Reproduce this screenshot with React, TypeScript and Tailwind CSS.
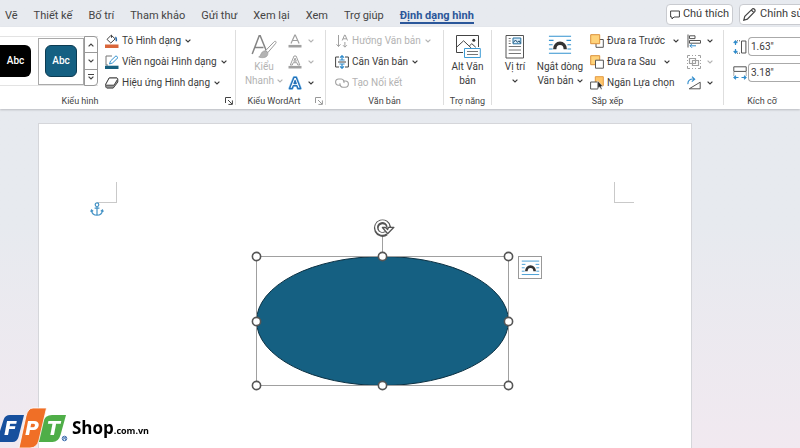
import type { ReactNode } from 'react';

const MUTED = '#a0a0a0';

function Chevron({ className = '' }: { className?: string }) {
  return (
    <svg className={`h-[6px] w-[6px] shrink-0 ${className}`} viewBox="0 0 6 6" fill="none" stroke="currentColor" strokeWidth="1.2">
      <path d="M.6 1.6 3 4 5.4 1.6" />
    </svg>
  );
}

function Launcher({ muted = false }: { muted?: boolean }) {
  return (
    <button aria-label="Mở hộp thoại" className={`absolute right-[2px] bottom-[3px] h-2 w-2 ${muted ? 'text-[#999]' : 'text-[#444]'}`}>
      <svg className="h-2 w-2" viewBox="0 0 8 8" fill="none" stroke="currentColor">
        <path d="M.5 6V.5H6M3 3l4 4M7.4 3.4v4h-4" />
      </svg>
    </button>
  );
}

function Group({ label, className, children, launcher }: { label: string; className: string; children: ReactNode; launcher?: ReactNode }) {
  return (
    <section className={`relative flex flex-col ${className}`}>
      <div className="flex h-16 items-start">{children}</div>
      <h2 className="text-center text-[9px] leading-[14px] whitespace-nowrap text-[#444]">{label}</h2>
      {launcher}
    </section>
  );
}

function Row({ icon, text, muted = false, gap = 'gap-1', chevron = true }: { icon: ReactNode; text: string; muted?: boolean; gap?: string; chevron?: boolean }) {
  return (
    <button disabled={muted} className={`flex h-[21px] items-center whitespace-nowrap ${gap} ${muted ? 'text-[#b3b3b3]' : 'text-[#3b3b3b]'}`}>
      <span className="flex items-center gap-[3px]">
        {icon}
        {text}
      </span>
      {chevron && <Chevron />}
    </button>
  );
}

function SmallButton({ icon, label, muted = false }: { icon: ReactNode; label: string; muted?: boolean }) {
  return (
    <button aria-label={label} disabled={muted} className={`flex h-[21px] items-center gap-[6px] ${muted ? 'text-[#b3b3b3]' : 'text-[#3b3b3b]'}`}>
      {icon}
      <Chevron />
    </button>
  );
}

const icon14 = 'h-[14px] w-[14px] shrink-0';

const FillIcon = () => (
  <svg className={icon14} viewBox="0 0 14 14" fill="none">
    <path d="M6.5.8v3M6.2 1.2 2 5.4 5.8 9l4.4-4.1-4-3.7Z" stroke="#444" />
    <path d="M10.3 3.2c1.3.4 1.2 2 1 4" stroke="#2b6cab" strokeWidth="1.5" />
    <path d="M0 10.5h13.5V14H0z" fill="#d9663a" />
  </svg>
);
const OutlineIcon = () => (
  <svg className={icon14} viewBox="0 0 14 14" fill="none">
    <path d="M7 1H1v9h2" stroke="#777" />
    <path d="m4.5 9 1-3L11 .8l2 1.8-5.4 5.3L4.5 9Z" fill="#fff" stroke="#3492cf" />
    <path d="M0 10.7h13.5V14H0z" fill="#17607f" />
  </svg>
);
const EffectIcon = () => (
  <svg className={icon14} viewBox="0 0 14 14" stroke="#444" strokeLinejoin="round">
    <path d="m4.2 2-3.4 6.5v2.6l1 1h6.4l4.6-6V3.2L12 2H4.2Z" fill="#999" />
    <path d="M4.2 2H12q1 .4.5 1.4L9 9.2H1.3q-1 0-.5-1.1L4.2 2Z" fill="#fff" />
  </svg>
);
const LetterIcon = ({ variant }: { variant: 'fill' | 'outline' | 'effect' }) =>
  variant === 'effect' ? (
    <svg className={icon14} viewBox="0 0 14 14" fill="none" strokeLinejoin="round">
      <path d="M1.5 12.5 6 1.3h2.2l4.4 11.2h-2.7L8.9 9.7H5.2l-1 2.8H1.5ZM6 7.5h2.2L7.1 4.4 6 7.5Z" stroke="#8cc6f0" strokeWidth="2.4" />
      <path d="M1.5 12.5 6 1.3h2.2l4.4 11.2h-2.7L8.9 9.7H5.2l-1 2.8H1.5ZM6 7.5h2.2L7.1 4.4 6 7.5Z" fill="#fff" stroke="#2370b7" strokeWidth="1.3" />
    </svg>
  ) : (
    <svg className={icon14} viewBox="0 0 14 14" fill="none" stroke={MUTED}>
      {variant === 'fill' ? (
        <path d="M3 9.6 6.8 1h.5l3.8 8.6M4.4 6.5h5.3" strokeWidth="1.2" />
      ) : (
        <path d="M2.3 10 6 1h2.1l3.7 9h-2l-.9-2.3H5.2L4.3 10h-2ZM5.8 6.2h2.5L7.1 3.1 5.8 6.2Z" />
      )}
      <path d="M.5 12.2h13" strokeWidth="2.6" />
    </svg>
  );
const DirectionIcon = () => (
  <svg className={icon14} viewBox="0 0 14 14" fill="none" stroke={MUTED}>
    <path d="M3.5 1v11.5M1.5 10.3l2 2.2 2-2.2M7.2 6.5 9.6 1h.5l2.4 5.5M8 4.8h3.8M9.9 8v5M8 11.2l1.9 2 2-2" />
  </svg>
);
const AlignTextIcon = () => (
  <svg className={icon14} viewBox="0 0 14 14" fill="none">
    <path d="M4 2H.6v10H4M10 2h3.4v10H10" stroke="#444" />
    <path d="M3 7h8" stroke="#444" />
    <path d="M7 .5V5M7 9v4.5M5 2.6 7 .7l2 1.9M5 11.4l2 1.9 2-1.9M4.4 5h5.2M4.4 9h5.2" stroke="#2f8bcb" strokeWidth="1.2" />
  </svg>
);
const LinkIcon = () => (
  <svg className={icon14} viewBox="0 0 14 14" fill="none" stroke={MUTED} strokeWidth="1.1">
    <path d="M6 9.2H3.7a3 3 0 0 1 0-6.2h2.5a3 3 0 0 1 2.7 4" />
    <path d="M8 5h2.3a3 3 0 0 1 0 6.2H7.8a3 3 0 0 1-2.7-4" />
  </svg>
);
const QuickStyleIcon = () => (
  <svg className="h-[26px] w-[26px]" viewBox="0 0 26 26" fill="none">
    <path d="M1.2 20 8.2 1.8h1L15 16M4 13.5h8.5" stroke="#858585" strokeWidth="1.5" />
    <path d="M24.5 7.3c1 .7.6 1.5 0 2.3l-7.7 9-2.2-2 8.2-8.5c.6-.6 1-1 1.7-.8Z" fill="#fff" stroke="#999" />
    <path d="M14 16.8c2.4.1 3.6 2.2 2.4 4.6-1.2 2.2-5.4 3-8.7 1.5 2.5-.5 1.7-5.6 6.3-6.1Z" fill="#b3b3b3" stroke="#999" strokeWidth=".7" />
  </svg>
);
const AltTextIcon = () => (
  <svg className="h-[26px] w-[26px]" viewBox="0 0 26 26" fill="none">
    <path d="M8 18.5H1.5v-17h22V13" stroke="#444" />
    <path d="m1.8 13 6.8-6.2 7.6 7.2M14.3 12l2.5-2.3 4 3.6" stroke="#444" />
    <circle cx="18.8" cy="6.3" r="1.5" fill="#333" />
    <path d="M9.5 14.5h15.8v9H9.5z" fill="#fff" stroke="#3d9bd5" />
    <path d="M12 17.5h11M12 20.5h11" stroke="#777" />
  </svg>
);
const PositionIcon = () => (
  <svg className="h-[26px] w-[20px]" viewBox="0 0 20 26" fill="none">
    <path d="M1 1.5h17.5v22.5H1z" fill="#fff" stroke="#555" />
    <path d="M8 4h7.8v5.8H8z" fill="#d6ebfa" stroke="#26709f" />
    <path d="M8.3 8.6 10.5 6l2 2.4 1.5-1.6 1.5 2.5" stroke="#1f4e6f" />
    <path d="M3.7 4.5h2M3.7 7h2M3.7 9.5h2M3.7 12.5H16M3.7 16H16M3.7 19.5H16" stroke="#777" />
  </svg>
);
const WrapIcon = ({ className }: { className: string }) => (
  <svg className={className} viewBox="0 0 26 22" fill="none">
    <path d="M1 1.5h24M1 20h24M1 6h5M20 6h5M1 10.7h4M21 10.7h4M1 15.4h4M21 15.4h4" stroke="#3393d0" strokeWidth="1.2" />
    <path d="M7.3 15.5a5.7 6.4 0 0 1 11.4 0" stroke="#333" strokeWidth="3.6" />
  </svg>
);
const ForwardIcon = () => (
  <svg className={icon14} viewBox="0 0 14 14">
    <path d="M9.5 5.5h3.8v7.8H6V10" fill="#fff" stroke="#555" />
    <path d="M.7.7h9v9h-9z" fill="#ffd37a" stroke="#dc9138" />
  </svg>
);
const BackwardIcon = () => (
  <svg className={icon14} viewBox="0 0 14 14">
    <path d="M.7.7h9v9h-9z" fill="#ffd37a" stroke="#dc9138" />
    <path d="M5.5 5.2h7.9v8H5.5z" fill="#fff" stroke="#555" />
  </svg>
);
const PaneIcon = () => (
  <svg className={icon14} viewBox="0 0 14 14">
    <path d="M5.3.7h8v9h-8z" fill="#ffc568" stroke="#e39a43" />
    <path d="M.6 6h7.2v7H.6z" fill="#fff" stroke="#555" />
    <path d="m7.6 4.8.3 7.6 1.8-1.5 1.3 2.6 1.1-.6-1.2-2.4h2.1L7.6 4.8Z" fill="#222" stroke="#fff" strokeWidth=".5" />
  </svg>
);
const AlignIcon = () => (
  <svg className={icon14} viewBox="0 0 14 14" fill="none">
    <path d="M1 .5v13M2.5 1.8H8v2.8H2.5zM2.5 6.5h11v2.7h-11z" stroke="#555" />
    <path d="M9 11.8H3M5 9.8l-2 2 2 2" stroke="#2f8bcb" />
  </svg>
);
const GroupIcon = () => (
  <svg className={icon14} viewBox="0 0 14 14" fill="none" stroke={MUTED}>
    <path d="M2.5 3.5h6v5h-6zM5.5 5.5h6v5h-6z" strokeWidth="1.2" />
    <path d="M.5 3V.5H3M11 .5h2.5V3M13.5 11v2.5H11M3 13.5H.5V11M5 .5h1M8 .5h1M5 13.5h1M8 13.5h1M.5 5v1M.5 8v1M13.5 5v1M13.5 8v1" />
  </svg>
);
const RotateIcon = () => (
  <svg className={icon14} viewBox="0 0 14 14" fill="none">
    <path d="M2.2 12.8h11V6.2l-11 6.6Z" stroke="#555" />
    <path d="M1 8.2C.4 4.8 3.3 2.5 7 3.2M5 .7l2.7 2.6L4.8 5.6" stroke="#2f8bcb" strokeWidth="1.1" />
  </svg>
);
const HeightIcon = () => (
  <svg className={icon14} viewBox="0 0 14 14" fill="none">
    <path d="M8.5 1h4.4v12H8.5z" stroke="#555" />
    <path d="M4 .8h3M4 13.2h3" stroke="#555" strokeDasharray="1 1" />
    <path d="M2.5 1v4M2.5 9v4M.7 3l1.8-2 1.8 2M.7 11l1.8 2 1.8-2" stroke="#2f8bcb" strokeWidth="1.2" />
  </svg>
);
const WidthIcon = () => (
  <svg className={icon14} viewBox="0 0 14 14" fill="none">
    <path d="M.8.8h12.4v4.6H.8z" stroke="#555" />
    <path d="M.8 6.5v3M13.2 6.5v3" stroke="#555" strokeDasharray="1 1" />
    <path d="M1 11.5h4.5M8.5 11.5H13M3 9.7l-2 1.8 2 1.8M11 9.7l2 1.8-2 1.8" stroke="#2f8bcb" strokeWidth="1.2" />
  </svg>
);

const tabs = ['Vẽ', 'Thiết kế', 'Bố trí', 'Tham khảo', 'Gửi thư', 'Xem lại', 'Xem', 'Trợ giúp'];

function TabBar() {
  return (
    <header className="flex h-[27px] items-start overflow-hidden pt-1 pl-[5px]">
      <nav className="flex gap-4 pt-px text-[11px] leading-[22px] whitespace-nowrap text-[#444]">
        {tabs.map((tab) => (
          <button key={tab} className="h-[22px]">{tab}</button>
        ))}
        <button aria-current="page" className="h-[19px] border-b-2 border-[#2b579a] font-bold text-[#2b579a]">Định dạng hình</button>
      </nav>
      <div className="ml-auto flex w-[134px] shrink-0 gap-[6px] text-[11px] whitespace-nowrap text-[#3b3b3b]">
        <button className="flex h-[21px] w-[67px] shrink-0 items-center justify-center gap-[3px] rounded border border-[#c9cbd0] bg-white">
          <svg className="h-[10px] w-[10px] shrink-0" viewBox="0 0 10 10" fill="none" stroke="#444">
            <path d="M.6 1h8.8v6H4L2 9V7H.6V1Z" />
          </svg>
          Chú thích
        </button>
        <button className="flex h-[21px] w-[90px] shrink-0 items-center gap-1 rounded border border-[#c9cbd0] bg-white pl-[3px]">
          <svg className="h-[13px] w-[13px] shrink-0" viewBox="0 0 13 13" fill="none" stroke="#444" strokeWidth="1.2">
            <path d="m.8 12.2 1-3.8L9.4.9c1.5-.8 3.2.8 2.5 2.4l-7.6 7.8-3.5 1.1ZM8.3 2l2.6 2.6" />
          </svg>
          Chỉnh sửa
        </button>
      </div>
    </header>
  );
}

function Divider() {
  return <div className="h-[75px] w-px shrink-0 bg-[#dedede]" />;
}

function Gallery() {
  return (
    <div className="mt-[6px] flex h-[50px] w-[98px] shrink-0 items-center border-y border-[#e3e3e3]">
      <button aria-label="Kiểu đen" className="h-8 w-[31px] rounded-r-md bg-black text-[10px] font-medium text-white">Abc</button>
      <div className="ml-[7px] flex h-[47px] w-[46px] items-center justify-center border border-[#aaa]">
        <button className="h-8 w-8 rounded-md border border-[#0c3b52] bg-[#156082] text-[10px] font-medium text-white">Abc</button>
      </div>
      <div className="flex h-[50px] flex-1 flex-col divide-y divide-[#999] rounded-r-sm border border-[#999] text-[#444]">
        <button aria-label="Lên" className="flex flex-1 items-center justify-center"><Chevron className="rotate-180" /></button>
        <button aria-label="Xuống" className="flex flex-1 items-center justify-center"><Chevron /></button>
        <button aria-label="Thêm" className="flex flex-1 flex-col items-center justify-center">
          <span className="h-px w-[6px] bg-current" />
          <Chevron />
        </button>
      </div>
    </div>
  );
}

function Ribbon() {
  return (
    <div className="flex h-[82px] items-start overflow-hidden bg-white pt-[3px] text-[10px] leading-[14px] shadow-[0_1px_2px_rgba(0,0,0,0.2)]">
      <Group label="Kiểu hình" className="w-[235px] shrink-0 [&>h2]:pr-[75px]" launcher={<Launcher />}>
        <Gallery />
        <div className="ml-[7px] flex flex-col">
          <Row icon={<FillIcon />} text="Tô Hình dạng" />
          <Row icon={<OutlineIcon />} text="Viền ngoài Hình dạng" />
          <Row icon={<EffectIcon />} text="Hiệu ứng Hình dạng" />
        </div>
      </Group>
      <Divider />
      <Group label="Kiểu WordArt" className="w-[89px] shrink-0 [&>h2]:pr-[13px]" launcher={<Launcher muted />}>
        <button disabled className="ml-1 flex w-[48px] shrink-0 flex-col items-center pt-1 text-[#b3b3b3]">
          <QuickStyleIcon />
          <span>Kiểu</span>
          <span className="flex items-center gap-[3px] whitespace-nowrap">Nhanh <Chevron /></span>
        </button>
        <div className="flex flex-col">
          <SmallButton muted label="Tô văn bản" icon={<LetterIcon variant="fill" />} />
          <SmallButton muted label="Viền văn bản" icon={<LetterIcon variant="outline" />} />
          <SmallButton label="Hiệu ứng văn bản" icon={<LetterIcon variant="effect" />} />
        </div>
      </Group>
      <Divider />
      <Group label="Văn bản" className="w-[117px] shrink-0">
        <div className="ml-[9px] flex flex-col">
          <Row muted icon={<DirectionIcon />} text="Hướng Văn bản" />
          <Row icon={<AlignTextIcon />} text="Căn Văn bản" />
          <Row muted chevron={false} icon={<LinkIcon />} text="Tạo Nối kết" />
        </div>
      </Group>
      <Divider />
      <Group label="Trợ năng" className="w-[47px] shrink-0">
        <button className="flex w-full flex-col items-center pt-1 text-[#3b3b3b]">
          <AltTextIcon />
          <span className="whitespace-nowrap">Alt Văn</span>
          <span>bản</span>
        </button>
      </Group>
      <Divider />
      <Group label="Sắp xếp" className="w-[231px] shrink-0">
        <button className="ml-[8px] flex w-[30px] shrink-0 flex-col items-center pt-1 text-[#3b3b3b]">
          <PositionIcon />
          <span className="whitespace-nowrap">Vị trí</span>
          <Chevron className="mt-1" />
        </button>
        <button className="ml-[4px] flex w-[52px] shrink-0 flex-col items-center pt-1 text-[#3b3b3b]">
          <span className="flex h-[26px] items-start"><WrapIcon className="h-[22px] w-[24px]" /></span>
          <span className="whitespace-nowrap">Ngắt dòng</span>
          <span className="flex items-center gap-[3px] whitespace-nowrap">Văn bản <Chevron /></span>
        </button>
        <div className="ml-1 flex w-[97px] shrink-0 flex-col items-start">
          <Row gap="gap-2" icon={<ForwardIcon />} text="Đưa ra Trước" />
          <Row gap="gap-2" icon={<BackwardIcon />} text="Đưa ra Sau" />
          <Row chevron={false} icon={<PaneIcon />} text="Ngăn Lựa chọn" />
        </div>
        <div className="flex flex-col">
          <SmallButton label="Căn chỉnh" icon={<AlignIcon />} />
          <SmallButton muted label="Nhóm" icon={<GroupIcon />} />
          <SmallButton label="Xoay" icon={<RotateIcon />} />
        </div>
      </Group>
      <Divider />
      <Group label="Kích cỡ" className="min-w-0 flex-1">
        <div className="flex w-full flex-col gap-[7px] pt-[7px] pl-[9px] text-[#3b3b3b]">
          <label className="flex h-[19px] items-center gap-px">
            <HeightIcon />
            <input aria-label="Chiều cao" defaultValue={'1.63"'} className="h-[19px] w-full min-w-0 rounded-l border border-r-0 border-[#aaa] pl-[2px]" />
          </label>
          <label className="flex h-[19px] items-center gap-px">
            <WidthIcon />
            <input aria-label="Chiều rộng" defaultValue={'3.18"'} className="h-[19px] w-full min-w-0 rounded-l border border-r-0 border-[#aaa] pl-[2px]" />
          </label>
        </div>
      </Group>
    </div>
  );
}

const handles = [
  [8, 42], [134, 42], [260, 42],
  [8, 107], [260, 107],
  [8, 171], [134, 171], [260, 171],
];

function SelectedShape() {
  return (
    <svg className="absolute top-[90px] left-[209px] h-[180px] w-[270px]" viewBox="0 0 270 180" fill="none" role="img" aria-label="Hình bầu dục">
      <ellipse cx="134.5" cy="107" rx="126" ry="64.5" fill="#156082" stroke="#0b3042" />
      <path d="M8.5 42.5h252v129H8.5zM134.5 22v17" stroke="#a0a0a0" />
      {handles.map(([x, y]) => (
        <circle key={`${x}-${y}`} cx={x + 0.5} cy={y + 0.5} r="4.1" fill="#fff" stroke="#555" strokeWidth="1.6" />
      ))}
      <path d="M138.2 19.3a6.3 6.3 0 1 1 2.6-6" stroke="#555" strokeWidth="4.8" />
      <path d="M137.8 18.7a6.3 6.3 0 1 1 2.8-5.7" stroke="#fff" strokeWidth="1.9" />
      <path d="M134.4 13.5h3.2l2 2 1-2.2h5.3l-6.3 6.4-5.2-6.2Z" fill="#fff" stroke="#555" strokeWidth="1.3" strokeLinejoin="round" />
    </svg>
  );
}

function Document() {
  return (
    <main className="flex flex-1 pt-[14px] pr-[108px] pl-[38px]">
      <article className="relative flex-1 border border-b-0 border-[#d5d6da] bg-white">
        <div className="absolute top-[58px] left-[58px] h-[21px] w-[20px] border-r border-b border-[#c9c9c9]" />
        <div className="absolute top-[58px] right-[57px] h-[21px] w-[20px] border-b border-l border-[#c9c9c9]" />
        <svg className="absolute top-[78px] left-[51px] h-[15px] w-[14px]" viewBox="0 0 14 15" fill="none" stroke="#4392c5" strokeWidth="1.2">
          <circle cx="7" cy="2.7" r="1.8" />
          <path d="M7 4.5V13M4.6 6.2h4.8M1.5 8.2C1.8 11 4 13.2 7 13.2s5.2-2.2 5.5-5M.7 9.8l.8-1.8 1.7 1.2M13.3 9.8l-.8-1.8-1.7 1.2" />
        </svg>
        <SelectedShape />
        <button aria-label="Tùy chọn bố trí" className="absolute top-[132px] left-[479px] flex h-[23px] w-[24px] items-center justify-center border border-[#999] bg-white">
          <WrapIcon className="h-[16px] w-[19px]" />
        </button>
      </article>
    </main>
  );
}

function Watermark() {
  return (
    <a href="#fpt" className="fixed bottom-0 left-0 flex h-[42px] items-start font-bold text-black" aria-label="FPT Shop.com.vn">
      <svg className="h-[42px] w-[70px]" viewBox="0 0 70 42">
        <path d="M10 9h14L18.500 31q-1.500 5-6 5H0V25L3.500 14Q5 9 10 9Z" fill="#17509d" />
        <path d="M52 9h14l-5.500 20q-2 7-8 7H38l5-20q2-7 9-7Z" fill="#4fae48" />
        <path d="M33 2h13.500L39 34q-2 8-9 8H19L26 10q2-8 7-8Z" fill="#f06f26" stroke="#fff" strokeWidth=".8" />
        <g fill="#fff" fontFamily="DejaVu Sans, sans-serif" fontSize="19" fontWeight="700" fontStyle="italic">
          <text x="4" y="29">F</text>
          <text x="25" y="29">P</text>
          <text x="47" y="29">T</text>
        </g>
        <circle cx="64.500" cy="32.500" r="2.300" fill="#fff" stroke="#17509d" strokeWidth=".8" />
        <text x="63.200" y="34" fill="#17509d" fontFamily="Liberation Sans, sans-serif" fontSize="4">R</text>
      </svg>
      <span className="mt-[12px] ml-[2px] font-['Open_Sans',sans-serif] text-[17px] leading-[20px]">Shop<span className="text-[9px]">.com.vn</span></span>
    </a>
  );
}

export default function App() {
  return (
    <div className="flex min-h-screen flex-col overflow-hidden bg-linear-to-b from-[#e7eaef] from-50% to-[#f1e9f0] font-['Roboto','Noto_Sans',sans-serif]">
      <TabBar />
      <Ribbon />
      <Document />
      <Watermark />
    </div>
  );
}
